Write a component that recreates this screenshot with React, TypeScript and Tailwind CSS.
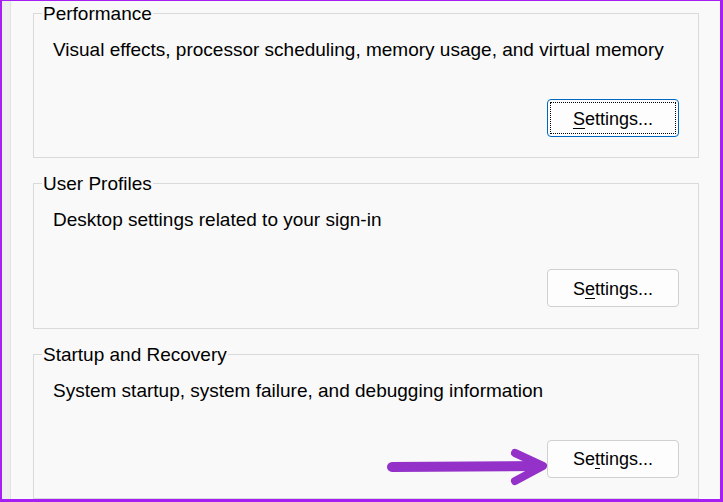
import React from "react";

const font = { fontFamily: '"Segoe UI", "Liberation Sans", Arial, sans-serif' };

function Btn({ pre, u, post, focused }: { pre: string; u: string; post: string; focused?: boolean }) {
  return (
    <button
      className={
        focused
          ? "relative self-end mr-[11px] w-[132px] h-[38px] rounded-[4px] border border-[#0067c0] bg-[#fdfdfd] text-[18px] text-black leading-none flex items-center justify-center"
          : "relative self-end mr-[11px] w-[132px] h-[38px] rounded-[4px] border border-[#d0d0d0] bg-[#fdfdfd] text-[18px] text-black leading-none flex items-center justify-center"
      }
    >
      {focused && <span className="absolute inset-[2px] border border-dotted border-black" />}
      <span className="pt-[1px]">
        {pre}
        <span className="underline underline-offset-[3px]">{u}</span>
        {post}
      </span>
    </button>
  );
}

function Group({ title, desc, btn }: { title: string; desc: string; btn: React.ReactNode }) {
  return (
    <fieldset className="flex flex-col border border-[#dadada] px-[8px] w-[666px] h-[158px]">
      <legend className="px-[1px] text-[19px] leading-[25px] text-black">{title}</legend>
      <div className="pl-[11px] pt-[11px] text-[19px] leading-[26px] text-black whitespace-nowrap">{desc}</div>
      <div className="mt-[36px] flex flex-col">{btn}</div>
    </fieldset>
  );
}

export default function App() {
  return (
    <div
      className="relative w-[723px] h-[502px] overflow-hidden border-l-2 border-t border-r-[3px] border-b-[3px] border-[#a51ff5] flex bg-[#f9f9f9]"
      style={font}
    >
      <div className="w-[9px] shrink-0 bg-[#eeeeee] border-r border-[#e2e2e2]" />
      <div className="w-[700px] shrink-0 flex flex-col gap-[13px] pl-[22px]">
        <Group
          title="Performance"
          desc="Visual effects, processor scheduling, memory usage, and virtual memory"
          btn={<Btn pre="" u="S" post="ettings..." focused />}
        />
        <Group
          title="User Profiles"
          desc="Desktop settings related to your sign-in"
          btn={<Btn pre="S" u="e" post="ttings..." />}
        />
        <Group
          title="Startup and Recovery"
          desc="System startup, system failure, and debugging information"
          btn={<Btn pre="Se" u="t" post="tings..." />}
        />
      </div>
      <svg className="absolute inset-0 pointer-events-none" width="723" height="502" viewBox="0 0 723 502">
        <line x1="390" y1="466" x2="536" y2="465" stroke="#9331c9" strokeWidth="10" strokeLinecap="round" />
        <polyline
          points="513,452 541,465 513,480"
          fill="none"
          stroke="#9331c9"
          strokeWidth="8"
          strokeLinecap="round"
          strokeLinejoin="round"
        />
      </svg>
    </div>
  );
}
